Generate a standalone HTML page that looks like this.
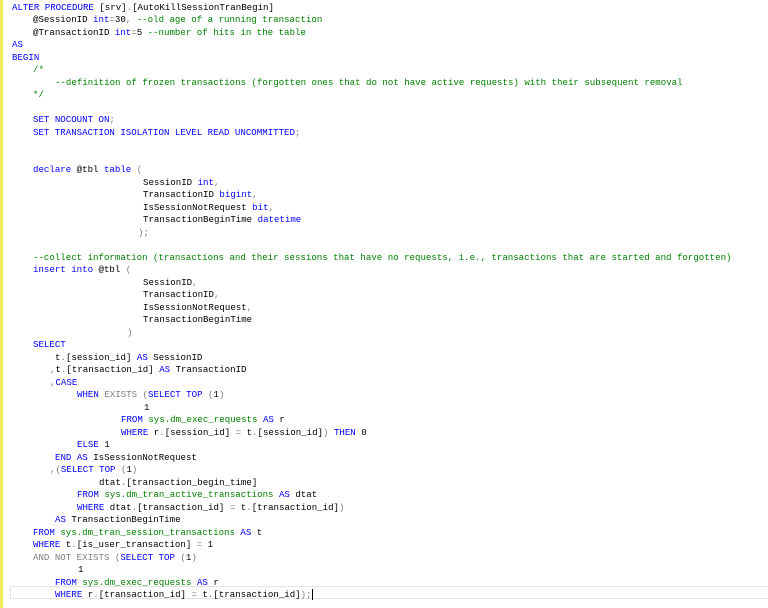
<!DOCTYPE html><html><head><style>
body{margin:0;width:768px;height:608px;background:#fff;overflow:hidden;position:relative;font-family:"Liberation Mono",monospace;font-size:9.1px;color:#000}
.bar{position:absolute;left:0;top:0;width:3px;height:608px;background:#f2ec5a}
.l{position:absolute;white-space:pre;line-height:12.5px;height:12.5px;top:0}
.k{color:#0000ff}.c{color:#008000}.g{color:#808080}.s{color:#008000}
.cur{position:absolute;left:10px;top:586px;width:758px;height:13px;border:1px solid #e4e4e4;border-right:none;box-sizing:border-box}
.caret{display:inline-block;width:1px;height:11px;background:#000;vertical-align:middle}
</style></head><body><div class="bar"></div><div class="cur"></div>
<div class="l" style="top:1.5px;left:12px"><span class="k">ALTER PROCEDURE</span> [srv]<span class="g">.</span>[AutoKillSessionTranBegin]</div>
<div class="l" style="top:14px;left:33px">@SessionID <span class="k">int</span><span class="g">=</span>30<span class="g">,</span> <span class="c">--old age of a running transaction</span></div>
<div class="l" style="top:26.5px;left:33px">@TransactionID <span class="k">int</span><span class="g">=</span>5 <span class="c">--number of hits in the table</span></div>
<div class="l" style="top:39px;left:12px"><span class="k">AS</span></div>
<div class="l" style="top:51.5px;left:12px"><span class="k">BEGIN</span></div>
<div class="l" style="top:64px;left:33px"><span class="c">/*</span></div>
<div class="l" style="top:76.5px;left:55px"><span class="c">--definition of frozen transactions (forgotten ones that do not have active requests) with their subsequent removal</span></div>
<div class="l" style="top:89px;left:33px"><span class="c">*/</span></div>
<div class="l" style="top:114px;left:33px"><span class="k">SET NOCOUNT ON</span><span class="g">;</span></div>
<div class="l" style="top:126.5px;left:33px"><span class="k">SET TRANSACTION ISOLATION LEVEL READ UNCOMMITTED</span><span class="g">;</span></div>
<div class="l" style="top:164px;left:33px"><span class="k">declare</span> @tbl <span class="k">table</span> <span class="g">(</span></div>
<div class="l" style="top:176.5px;left:143px">SessionID <span class="k">int</span><span class="g">,</span></div>
<div class="l" style="top:189px;left:143px">TransactionID <span class="k">bigint</span><span class="g">,</span></div>
<div class="l" style="top:201.5px;left:143px">IsSessionNotRequest <span class="k">bit</span><span class="g">,</span></div>
<div class="l" style="top:214px;left:143px">TransactionBeginTime <span class="k">datetime</span></div>
<div class="l" style="top:226.5px;left:138px"><span class="g">);</span></div>
<div class="l" style="top:251.5px;left:33px"><span class="c">--collect information (transactions and their sessions that have no requests, i.e., transactions that are started and forgotten)</span></div>
<div class="l" style="top:264px;left:33px"><span class="k">insert into</span> @tbl <span class="g">(</span></div>
<div class="l" style="top:276.5px;left:143px">SessionID<span class="g">,</span></div>
<div class="l" style="top:289px;left:143px">TransactionID<span class="g">,</span></div>
<div class="l" style="top:301.5px;left:143px">IsSessionNotRequest<span class="g">,</span></div>
<div class="l" style="top:314px;left:143px">TransactionBeginTime</div>
<div class="l" style="top:326.5px;left:127px"><span class="g">)</span></div>
<div class="l" style="top:339px;left:33px"><span class="k">SELECT</span></div>
<div class="l" style="top:351.5px;left:55px">t<span class="g">.</span>[session_id] <span class="k">AS</span> SessionID</div>
<div class="l" style="top:364px;left:50px"><span class="g">,</span>t<span class="g">.</span>[transaction_id] <span class="k">AS</span> TransactionID</div>
<div class="l" style="top:376.5px;left:50px"><span class="g">,</span><span class="k">CASE</span></div>
<div class="l" style="top:389px;left:77px"><span class="k">WHEN</span> <span class="g">EXISTS (</span><span class="k">SELECT TOP</span> <span class="g">(</span>1<span class="g">)</span></div>
<div class="l" style="top:401.5px;left:144px">1</div>
<div class="l" style="top:414px;left:121px"><span class="k">FROM</span> <span class="s">sys.dm_exec_requests</span> <span class="k">AS</span> r</div>
<div class="l" style="top:426.5px;left:121px"><span class="k">WHERE</span> r<span class="g">.</span>[session_id] <span class="g">=</span> t<span class="g">.</span>[session_id]<span class="g">)</span> <span class="k">THEN</span> 0</div>
<div class="l" style="top:439px;left:77px"><span class="k">ELSE</span> 1</div>
<div class="l" style="top:451.5px;left:55px"><span class="k">END AS</span> IsSessionNotRequest</div>
<div class="l" style="top:464px;left:50px"><span class="g">,(</span><span class="k">SELECT TOP</span> <span class="g">(</span>1<span class="g">)</span></div>
<div class="l" style="top:476.5px;left:99px">dtat<span class="g">.</span>[transaction_begin_time]</div>
<div class="l" style="top:489px;left:77px"><span class="k">FROM</span> <span class="s">sys.dm_tran_active_transactions</span> <span class="k">AS</span> dtat</div>
<div class="l" style="top:501.5px;left:77px"><span class="k">WHERE</span> dtat<span class="g">.</span>[transaction_id] <span class="g">=</span> t<span class="g">.</span>[transaction_id]<span class="g">)</span></div>
<div class="l" style="top:514px;left:55px"><span class="k">AS</span> TransactionBeginTime</div>
<div class="l" style="top:526.5px;left:33px"><span class="k">FROM</span> <span class="s">sys.dm_tran_session_transactions</span> <span class="k">AS</span> t</div>
<div class="l" style="top:539px;left:33px"><span class="k">WHERE</span> t<span class="g">.</span>[is_user_transaction] <span class="g">=</span> 1</div>
<div class="l" style="top:551.5px;left:33px"><span class="g">AND NOT EXISTS (</span><span class="k">SELECT TOP</span> <span class="g">(</span>1<span class="g">)</span></div>
<div class="l" style="top:564px;left:78px">1</div>
<div class="l" style="top:576.5px;left:55px"><span class="k">FROM</span> <span class="s">sys.dm_exec_requests</span> <span class="k">AS</span> r</div>
<div class="l" style="top:589px;left:55px"><span class="k">WHERE</span> r<span class="g">.</span>[transaction_id] <span class="g">=</span> t<span class="g">.</span>[transaction_id]<span class="g">);</span><span class="caret"></span></div>
</body></html>
